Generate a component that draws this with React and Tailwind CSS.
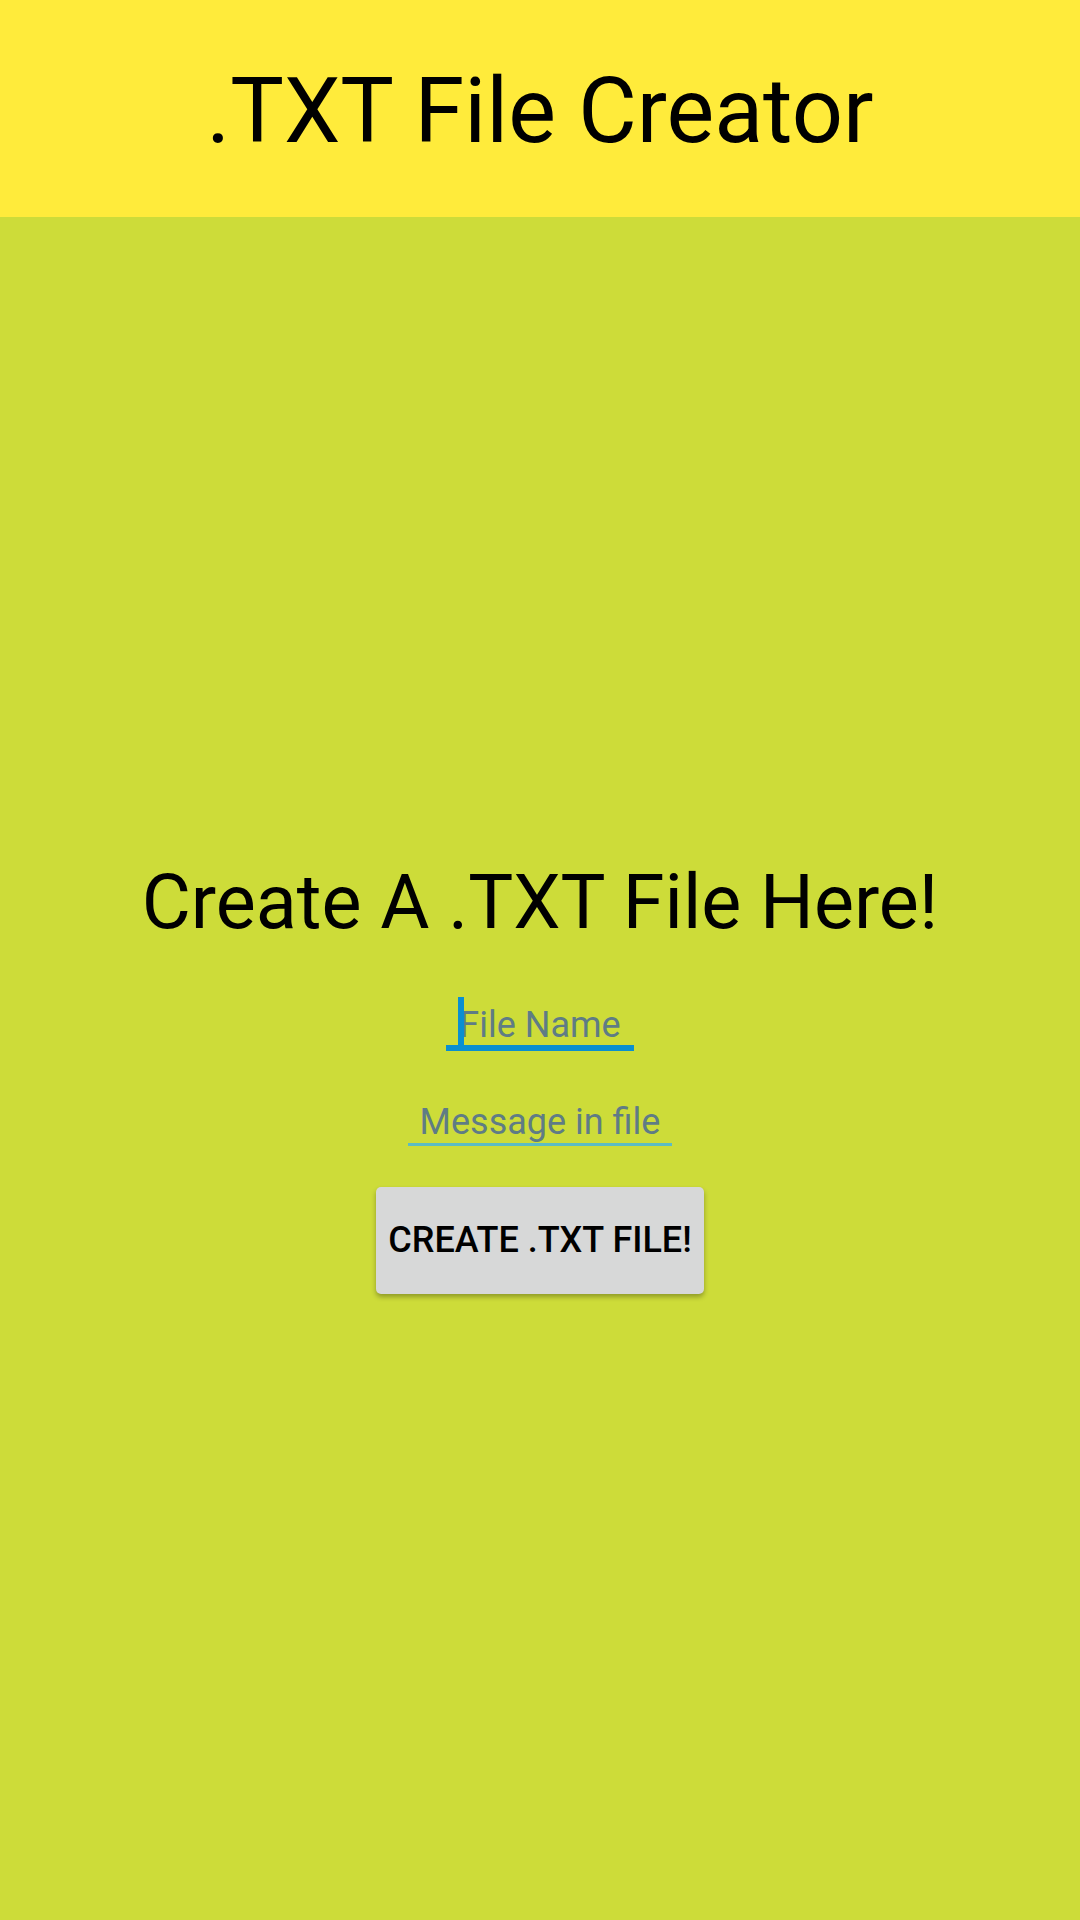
import React from 'react';

export default function App() {
  return (
    <div className="min-h-[1920px] flex flex-col bg-[#cddc39] font-['Roboto','Liberation_Sans',sans-serif]">
      <header className="h-[217px] bg-[#ffeb3b] flex items-center justify-center">
        <h1 className="text-[90px] leading-none text-black mt-[6px]">.TXT File Creator</h1>
      </header>

      <main className="flex flex-col items-center pt-[648px]">
        <h2 className="text-[75.5px] leading-none text-black">Create A .TXT File Here!</h2>

        {/* focused field */}
        <div className="relative mt-[66px] px-[13px] pb-[2px] border-b-[6px] border-[#0a8fd0]">
          <span className="block text-[36px] leading-none text-[#5f7c85]">File Name</span>
          <span className="absolute left-[12px] top-[-10px] bottom-0 w-[6px] bg-[#0a8fd0]" />
        </div>

        <div className="mt-[53px] px-[12px] pb-[3px] border-b-[3px] border-[#5cbcc4]">
          <span className="block text-[36px] leading-none text-[#5f7c85]">Message in file</span>
        </div>

        <button className="mt-[41px] w-[328px] h-[107px] flex items-center justify-center rounded-[5px] bg-[#d7d8d8] shadow-[0_3px_5px_rgba(0,0,0,0.3)] text-[36px] font-medium text-black">
          CREATE .TXT FILE!
        </button>
      </main>
    </div>
  );
}
